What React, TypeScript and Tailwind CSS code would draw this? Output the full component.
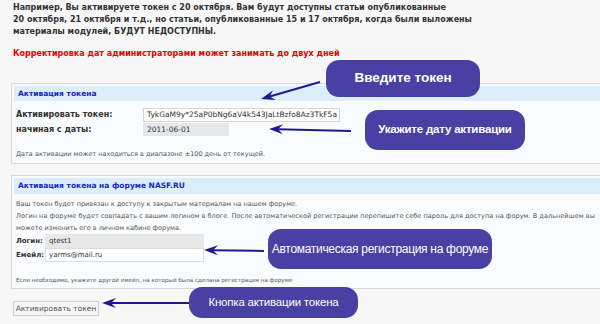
import * as React from 'react';

const NAVY = '#1d1a8c';

type ArrowProps = { x1: number; y1: number; x2: number; y2: number };

// Thin line with a swept "stealth" arrowhead at (x2, y2)
const Arrow: React.FC<ArrowProps> = ({ x1, y1, x2, y2 }) => {
  const dx = x2 - x1;
  const dy = y2 - y1;
  const len = Math.hypot(dx, dy);
  const ux = dx / len;
  const uy = dy / len;
  const nx = -uy;
  const ny = ux;
  const hl = 14;
  const hw = 5;
  const notch = 9;
  const bx = x2 - ux * hl;
  const by = y2 - uy * hl;
  const mx = x2 - ux * notch;
  const my = y2 - uy * notch;
  const pts = [
    `${x2},${y2}`,
    `${bx + nx * hw},${by + ny * hw}`,
    `${mx},${my}`,
    `${bx - nx * hw},${by - ny * hw}`,
  ].join(' ');
  return (
    <g>
      <line x1={x1} y1={y1} x2={mx} y2={my} stroke={NAVY} strokeWidth={2} />
      <polygon points={pts} fill={NAVY} />
    </g>
  );
};

const Callout: React.FC<{ className: string; children: React.ReactNode }> = ({
  className,
  children,
}) => (
  <div
    className={
      'absolute flex items-center justify-center rounded-[13px] bg-[#4840a3] text-white whitespace-nowrap ' +
      className
    }
    style={{ fontFamily: '"Liberation Sans", Arial, sans-serif' }}
  >
    {children}
  </div>
);

export default function App() {
  return (
    <div
      className="relative h-[324px] w-[600px] overflow-hidden bg-[#f7f7f7] text-[#444]"
      style={{ fontFamily: '"DejaVu Sans", Verdana, sans-serif' }}
    >
      {/* Intro text */}
      <div className="pl-[13px] pt-[2px] text-[8px] font-bold leading-[12px] whitespace-nowrap">
        <p className="text-[#333]">
          Например, Вы активируете токен с 20 октября. Вам будут доступны статьи опубликованные
          <br />
          20 октября, 21 октября и т.д., но статьи, опубликованные 15 и 17 октября, когда были выложены
          <br />
          материалы модулей, БУДУТ НЕДОСТУПНЫ.
        </p>
        <p className="mt-[10px] text-[#e60000]">
          Корректировка дат администраторами может занимать до двух дней
        </p>
      </div>

      {/* Token activation box */}
      <section className="ml-[11px] mt-[23px] w-[600px] border border-[#d9d9d9] bg-[#f9fbfd] p-[2px]">
        <div className="h-[15px] bg-[#dbeefc] pl-[4px] text-[7.5px] font-bold leading-[15px] text-[#1b24c4]">
          Активация токена
        </div>
        <div className="mt-[7px] flex flex-col gap-[1px] pl-[2px] text-[8px] font-bold text-[#333]">
          <div className="flex h-[14px] items-center">
            <span className="w-[127px]">Активировать токен:</span>
            <div className="h-[14px] w-[197px] overflow-hidden border border-[#d6d6d6] bg-white px-[3px] text-[7.5px] font-normal leading-[12px] whitespace-nowrap">
              TykGaM9y*25aP0bNg6aV4k543JaLtBzfo8Az3TkF5a
            </div>
          </div>
          <div className="flex h-[13px] items-center">
            <span className="w-[127px]">начиная с даты:</span>
            <div className="h-[13px] w-[86px] bg-[#e7e7e7] px-[4px] text-[7.5px] font-normal leading-[13px]">
              2011-06-01
            </div>
          </div>
        </div>
        <p className="mt-[13px] mb-[2px] pl-[2px] text-[6.5px] leading-[10px] text-[#555]">
          Дата активации может находиться в диапазоне ±100 день от текущей.
        </p>
      </section>

      {/* Forum activation box */}
      <section className="ml-[11px] mt-[11px] w-[600px] border border-[#d9d9d9] bg-[#f9fbfd] p-[2px]">
        <div className="h-[16px] bg-[#dbeefc] pl-[4px] text-[7.5px] font-bold leading-[16px] text-[#1b24c4]">
          Активация токена на форуме NASF.RU
        </div>
        <p className="mt-[4px] pl-[2px] text-[6.5px] leading-[12px] whitespace-nowrap text-[#555]">
          Ваш токен будет привязан к доступу к закрытым материалам на нашем форуме.
          <br />
          <span className="tracking-[0.05px]">
            Логин на форуме будет совпадать с вашим логином в блоге. После автоматической регистрации перепишите себе пароль для доступа на форум. В дальнейшем вы
          </span>
          <br />
          можете изменить его в личном кабине форума.
        </p>
        <div className="flex flex-col pl-[2px] text-[7px] font-bold text-[#333]">
          <div className="flex h-[14px] items-center">
            <span className="w-[29px]">Логин:</span>
            <div className="h-[14px] w-[159px] bg-[#e8e8e8] px-[4px] text-[7px] font-normal leading-[14px]">
              qtest1
            </div>
          </div>
          <div className="flex h-[14px] items-center">
            <span className="w-[29px]">Емейл:</span>
            <div className="h-[14px] w-[159px] border border-[#dcdcdc] bg-white px-[3px] text-[7px] font-normal leading-[12px]">
              yarms@mail.ru
            </div>
          </div>
        </div>
        <p className="mt-[13px] mb-[1px] pl-[2px] text-[5.6px] leading-[10px] whitespace-nowrap text-[#555]">
          Если необходимо, укажите другой емейл, на который была сделана регистрация на форуме
        </p>
      </section>

      <button className="ml-[13px] mt-[12px] h-[15px] w-[86px] border border-[#cfcfcf] bg-[#f5f5f5] text-[7.5px] leading-[13px] text-[#555]">
        Активировать токен
      </button>

      {/* Annotation overlay */}
      <svg className="pointer-events-none absolute left-0 top-0" width={600} height={324}>
        <Arrow x1={320} y1={82} x2={261} y2={99} />
        <Arrow x1={351} y1={131} x2={269} y2={129} />
        <Arrow x1={264} y1={251} x2={204} y2={250} />
        <Arrow x1={192} y1={303} x2={102} y2={303} />
      </svg>

      <Callout className="left-[326px] top-[60px] h-[37px] w-[154px] text-[13.5px] font-bold">
        Введите токен
      </Callout>
      <Callout className="left-[365px] top-[110px] h-[40px] w-[160px] text-[11.5px] font-bold tracking-[-0.2px]">
        Укажите дату активации
      </Callout>
      <Callout className="left-[268px] top-[229px] h-[40px] w-[224px] text-[12px] tracking-[-0.3px]">
        Автоматическая регистрация на форуме
      </Callout>
      <Callout className="left-[189px] top-[287px] h-[31px] w-[169px] text-[11.5px] tracking-[-0.2px]">
        Кнопка активации токена
      </Callout>
    </div>
  );
}
